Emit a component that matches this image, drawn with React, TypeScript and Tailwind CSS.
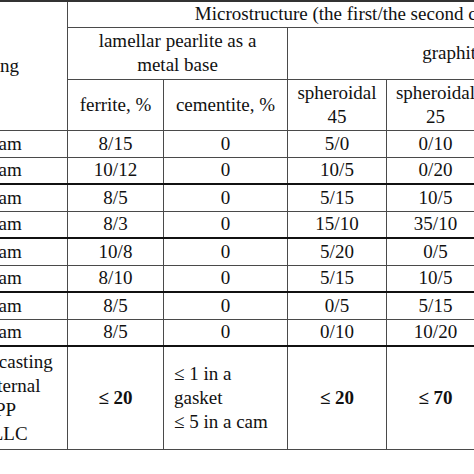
import React from 'react';

interface CamRow {
  name: string;
  ferrite: string;
  cementite: string;
  sph45: string;
  sph25: string;
  vermicular: string;
  lamellar: string;
  groupStart?: boolean; // thick rule above the row
}

const rows: CamRow[] = [
  { name: 'No. 1 cam', ferrite: '8/15', cementite: '0', sph45: '5/0', sph25: '0/10', vermicular: '30/40', lamellar: '65/50' },
  { name: 'No. 2 cam', ferrite: '10/12', cementite: '0', sph45: '10/5', sph25: '0/20', vermicular: '40/45', lamellar: '50/30' },
  { name: 'No. 3 cam', ferrite: '8/5', cementite: '0', sph45: '5/15', sph25: '10/5', vermicular: '35/30', lamellar: '50/50', groupStart: true },
  { name: 'No. 4 cam', ferrite: '8/3', cementite: '0', sph45: '15/10', sph25: '35/10', vermicular: '20/40', lamellar: '30/40' },
  { name: 'No. 5 cam', ferrite: '10/8', cementite: '0', sph45: '5/20', sph25: '0/5', vermicular: '45/35', lamellar: '50/40', groupStart: true },
  { name: 'No. 6 cam', ferrite: '8/10', cementite: '0', sph45: '5/15', sph25: '10/5', vermicular: '35/40', lamellar: '50/40' },
  { name: 'No. 7 cam', ferrite: '8/5', cementite: '0', sph45: '0/5', sph25: '5/15', vermicular: '45/40', lamellar: '50/40', groupStart: true },
  { name: 'No. 8 cam', ferrite: '8/5', cementite: '0', sph45: '0/10', sph25: '10/20', vermicular: '40/30', lamellar: '50/40' },
];

// shared cell styles
const cell = 'border border-[#4a4a4a] p-0 text-center align-middle';
const head = `${cell} font-normal`;
const thick = 'border-t-2 border-t-[#111]';

export default function App() {
  return (
    <div className="w-[474px] h-[474px] overflow-hidden bg-white text-[#111] font-['Liberation_Serif',serif] text-[19px] leading-[24px]">
      <table className="table-fixed border-collapse w-[795px] -ml-[103px]">
        <colgroup>
          <col className="w-[170px]" />
          <col className="w-[96px]" />
          <col className="w-[124px]" />
          <col className="w-[99px]" />
          <col className="w-[98px]" />
          <col className="w-[104px]" />
          <col className="w-[104px]" />
        </colgroup>
        <thead>
          <tr className="h-[26px]">
            <th rowSpan={3} className={`${head} border-t-2 border-t-[#333]`}>Sampling</th>
            <th colSpan={6} className={`${head} border-t-2 border-t-[#333]`}>
              Microstructure (the first/the second cam), vol. %
            </th>
          </tr>
          <tr className="h-[52px]">
            <th colSpan={2} className={head}>
              lamellar pearlite as a
              <br />
              metal base
            </th>
            <th colSpan={4} className={head}>graphite shape, %</th>
          </tr>
          <tr className="h-[51px]">
            <th className={head}>ferrite, %</th>
            <th className={head}>cementite, %</th>
            <th className={head}>
              spheroidal
              <br />
              45
            </th>
            <th className={head}>
              spheroidal
              <br />
              25
            </th>
            <th className={head}>vermicular</th>
            <th className={head}>lamellar</th>
          </tr>
        </thead>
        <tbody>
          {rows.map((r) => (
            <tr key={r.name} className="h-[27px]">
              <td className={`${cell} ${r.groupStart ? thick : ''}`}>{r.name}</td>
              <td className={`${cell} ${r.groupStart ? thick : ''}`}>{r.ferrite}</td>
              <td className={`${cell} ${r.groupStart ? thick : ''}`}>{r.cementite}</td>
              <td className={`${cell} ${r.groupStart ? thick : ''}`}>{r.sph45}</td>
              <td className={`${cell} ${r.groupStart ? thick : ''}`}>{r.sph25}</td>
              <td className={`${cell} ${r.groupStart ? thick : ''}`}>{r.vermicular}</td>
              <td className={`${cell} ${r.groupStart ? thick : ''}`}>{r.lamellar}</td>
            </tr>
          ))}
          <tr className="h-[103px]">
            <td className={`${cell} ${thick}`}>
              Chill mold casting
              <br />
              for the external
              <br />
              AO NPP
              <br />
              Metall LLC
            </td>
            <td className={`${cell} ${thick} font-bold`}>≤ 20</td>
            <td className={`${cell} ${thick} text-left pl-[10px]`}>
              ≤ 1 in a
              <br />
              gasket
              <br />
              ≤ 5 in a cam
            </td>
            <td className={`${cell} ${thick} font-bold`}>≤ 20</td>
            <td className={`${cell} ${thick} font-bold`}>≤ 70</td>
            <td className={`${cell} ${thick} font-bold`}>≤ 30</td>
            <td className={`${cell} ${thick} font-bold`}>≤ 10</td>
          </tr>
        </tbody>
      </table>
    </div>
  );
}
